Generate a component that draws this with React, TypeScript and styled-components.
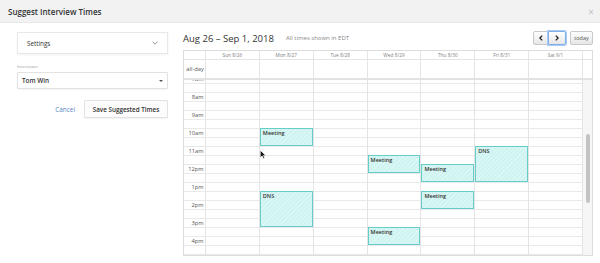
import React from "react";
import styled, { createGlobalStyle } from "styled-components";

const DAYS = ["Sun 8/26", "Mon 8/27", "Tue 8/28", "Wed 8/29", "Thu 8/30", "Fri 8/31", "Sat 9/1"];

const FIRST_HOUR = 7;
const LAST_LABEL_HOUR = 16;
const SLOT_HEIGHT = 9;
const SLOT_COUNT = 22;

interface CalEvent {
  day: number;
  start: number;
  end: number;
  title: string;
}

const EVENTS: CalEvent[] = [
  { day: 1, start: 10, end: 11, title: "Meeting" },
  { day: 1, start: 13.5, end: 15.5, title: "DNS" },
  { day: 3, start: 11.5, end: 12.5, title: "Meeting" },
  { day: 3, start: 15.5, end: 16.5, title: "Meeting" },
  { day: 4, start: 12, end: 13, title: "Meeting" },
  { day: 4, start: 13.5, end: 14.5, title: "Meeting" },
  { day: 5, start: 11, end: 13, title: "DNS" },
];

const hourLabel = (h: number) => {
  if (h === 12) return "12pm";
  return h < 12 ? `${h}am` : `${h - 12}pm`;
};

const slotLabel = (i: number) => {
  if (i % 2 !== 0) return "";
  const h = FIRST_HOUR + i / 2;
  return h <= LAST_LABEL_HOUR ? hourLabel(h) : "";
};

const App = () => {
  const slots = Array.from({ length: SLOT_COUNT }, (_, i) => i);

  return (
    <Modal>
      <GlobalStyle />
      <Header>
        <HeaderTitle>Suggest Interview Times</HeaderTitle>
        <Close>×</Close>
      </Header>

      <Body>
        <Sidebar>
          <Accordion>
            <span>Settings</span>
            <svg width="6" height="4" viewBox="0 0 6 4">
              <polyline points="0.5,0.8 3,3.2 5.5,0.8" fill="none" stroke="#777" strokeWidth="0.8" />
            </svg>
          </Accordion>

          <FieldLabel>Interviewer</FieldLabel>
          <Select>
            <span>Tom Win</span>
            <Caret />
          </Select>

          <Actions>
            <CancelLink>Cancel</CancelLink>
            <SaveButton>Save Suggested Times</SaveButton>
          </Actions>
        </Sidebar>

        <Main>
          <Toolbar>
            <RangeTitle>Aug 26 – Sep 1, 2018</RangeTitle>
            <TimezoneNote>All times shown in EDT</TimezoneNote>
            <NavGroup>
              <NavButton $side="left">
                <svg width="4" height="6" viewBox="0 0 4 6">
                  <polyline points="3.2,0.6 0.9,3 3.2,5.4" fill="none" stroke="#222" strokeWidth="1.3" />
                </svg>
              </NavButton>
              <NavButton $side="right" $focused>
                <svg width="4" height="6" viewBox="0 0 4 6">
                  <polyline points="0.8,0.6 3.1,3 0.8,5.4" fill="none" stroke="#222" strokeWidth="1.3" />
                </svg>
              </NavButton>
            </NavGroup>
            <TodayButton>today</TodayButton>
          </Toolbar>

          <Table>
            <HeadRow>
              <HeadCell />
              {DAYS.map((d) => (
                <HeadCell key={d}>{d}</HeadCell>
              ))}
              <HeadCell />
            </HeadRow>

            <AllDayRow>
              <AllDayAxis>all-day</AllDayAxis>
              {DAYS.map((d) => (
                <AllDayCell key={d} />
              ))}
              <AllDayCell />
            </AllDayRow>

            <Divider />

            <TimeBody>
              <Scroller>
                <ScrollContent>
                  {slots.map((i) => (
                    <SlotRow key={i}>
                      <SlotAxis>{slotLabel(i)}</SlotAxis>
                      <SlotLane />
                    </SlotRow>
                  ))}

                  <Columns>
                    {DAYS.map((d, dayIndex) => (
                      <DayColumn key={d}>
                        {EVENTS.filter((e) => e.day === dayIndex).map((e) => (
                          <Event
                            key={`${e.day}-${e.start}`}
                            style={{
                              top: (e.start - FIRST_HOUR) * SLOT_HEIGHT * 2,
                              height: (e.end - e.start) * SLOT_HEIGHT * 2,
                            }}
                          >
                            <EventTitle>{e.title}</EventTitle>
                          </Event>
                        ))}
                      </DayColumn>
                    ))}
                  </Columns>
                </ScrollContent>
              </Scroller>
              <Gutter>
                <Thumb />
              </Gutter>
            </TimeBody>
          </Table>
        </Main>
      </Body>

      <Pointer width="6" height="9" viewBox="0 0 8 12">
        <path d="M0.5 0.5 L0.5 10 L2.9 7.8 L4.6 11.4 L6.1 10.7 L4.4 7.2 L7.4 7.2 Z" fill="#111" stroke="#fff" strokeWidth="0.6" />
      </Pointer>
    </Modal>
  );
};

export default App;

const GlobalStyle = createGlobalStyle`
  html, body {
    margin: 0;
    padding: 0;
  }
  body {
    width: 600px;
    height: 263px;
    overflow: hidden;
    background: #ffffff;
    font-family: "Open Sans", "Liberation Sans", sans-serif;
    color: #333;
  }
`;

const Modal = styled.div`
  position: relative;
  width: 600px;
  height: 263px;
  display: flex;
  flex-direction: column;
  background: #ffffff;
`;

const Header = styled.div`
  height: 23px;
  box-sizing: border-box;
  flex-shrink: 0;
  display: flex;
  align-items: center;
  justify-content: space-between;
  padding: 0 6px 0 8px;
  background: #f2f2f3;
  border-bottom: 1px solid #e8e8e8;
`;

const HeaderTitle = styled.div`
  font-size: 8px;
  font-weight: 600;
  color: #333;
`;

const Close = styled.div`
  font-size: 10px;
  line-height: 10px;
  color: #c4c4c4;
  margin-top: 1px;
`;

const Body = styled.div`
  flex: 1;
  display: flex;
  min-height: 0;
`;

const Sidebar = styled.div`
  width: 183px;
  flex-shrink: 0;
  box-sizing: border-box;
  padding: 9px 15px 0 17px;
`;

const Accordion = styled.div`
  height: 22px;
  box-sizing: border-box;
  display: flex;
  align-items: center;
  justify-content: space-between;
  padding: 0 9px 0 9px;
  border: 1px solid #e8e8e8;
  box-shadow: 0 1px 2px rgba(0, 0, 0, 0.06);
  font-size: 6.3px;
  color: #333;
`;

const FieldLabel = styled.div`
  margin-top: 10px;
  font-size: 4px;
  line-height: 6px;
  color: #9a9a9a;
`;

const Select = styled.div`
  margin-top: 2px;
  height: 17px;
  box-sizing: border-box;
  display: flex;
  align-items: center;
  justify-content: space-between;
  padding: 0 4px 0 4px;
  border: 1px solid #e2e2e2;
  border-radius: 1px;
  box-shadow: 0 1px 1px rgba(0, 0, 0, 0.04);
  font-size: 6.4px;
  font-weight: 600;
  color: #333;
`;

const Caret = styled.span`
  width: 0;
  height: 0;
  border-left: 2px solid transparent;
  border-right: 2px solid transparent;
  border-top: 2px solid #555;
`;

const Actions = styled.div`
  margin-top: 11px;
  display: flex;
  align-items: center;
  justify-content: flex-end;
  gap: 9px;
`;

const CancelLink = styled.span`
  font-size: 6.4px;
  color: #5686c4;
`;

const SaveButton = styled.div`
  width: 84px;
  height: 18px;
  box-sizing: border-box;
  display: flex;
  align-items: center;
  justify-content: center;
  border: 1px solid #e2e2e2;
  border-radius: 1px;
  background: #fcfcfc;
  box-shadow: 0 1px 1px rgba(0, 0, 0, 0.05);
  font-size: 6.3px;
  font-weight: 600;
  color: #333;
`;

const Main = styled.div`
  flex: 1;
  box-sizing: border-box;
  padding: 8px 7px 0 0;
  display: flex;
  flex-direction: column;
`;

const Toolbar = styled.div`
  height: 14px;
  display: flex;
  align-items: center;
  margin-bottom: 5px;
`;

const RangeTitle = styled.div`
  font-size: 9.5px;
  color: #333;
  white-space: nowrap;
`;

const TimezoneNote = styled.div`
  margin-left: 12px;
  font-size: 6px;
  color: #888;
  white-space: nowrap;
`;

const NavGroup = styled.div`
  margin-left: auto;
  display: flex;
  height: 14px;
`;

const NavButton = styled.div<{ $side: "left" | "right"; $focused?: boolean }>`
  width: ${(p) => (p.$side === "left" ? 15 : 18)}px;
  height: 14px;
  box-sizing: border-box;
  display: flex;
  align-items: center;
  justify-content: center;
  background: linear-gradient(#ffffff, #e6e6e6);
  border: 1px solid ${(p) => (p.$focused ? "#7fb0ea" : "#c9c9c9")};
  box-shadow: ${(p) => (p.$focused ? "0 0 0 1px #a9cbf3" : "none")};
  border-radius: ${(p) => (p.$side === "left" ? "2px 0 0 2px" : "0 2px 2px 0")};
`;

const TodayButton = styled.div`
  margin-left: 4px;
  width: 23px;
  height: 14px;
  box-sizing: border-box;
  display: flex;
  align-items: center;
  justify-content: center;
  background: linear-gradient(#ffffff, #e6e6e6);
  border: 1px solid #c9c9c9;
  border-radius: 2px;
  font-size: 5.5px;
  color: #555;
`;

const Table = styled.div`
  width: 410px;
  height: 206px;
  box-sizing: border-box;
  border: 1px solid #dddddd;
  display: flex;
  flex-direction: column;
`;

const COLUMNS = "22px repeat(7, 1fr) 9px";

const HeadRow = styled.div`
  display: grid;
  grid-template-columns: ${COLUMNS};
  height: 9px;
  box-sizing: border-box;
  border-bottom: 1px solid #e4e4e4;
`;

const HeadCell = styled.div`
  border-right: 1px solid #e4e4e4;
  font-size: 4.8px;
  line-height: 8px;
  text-align: center;
  color: #808080;
  white-space: nowrap;

  &:last-child {
    border-right: none;
  }
`;

const AllDayRow = styled.div`
  display: grid;
  grid-template-columns: ${COLUMNS};
  height: 18px;
`;

const AllDayCell = styled.div`
  border-right: 1px solid #e4e4e4;

  &:last-child {
    border-right: none;
  }
`;

const AllDayAxis = styled.div`
  border-right: 1px solid #e4e4e4;
  display: flex;
  align-items: center;
  justify-content: flex-end;
  padding-right: 1px;
  font-size: 5.8px;
  color: #555;
  white-space: nowrap;
`;

const Divider = styled.div`
  height: 2px;
  background: #e2e2e2;
`;

const TimeBody = styled.div`
  flex: 1;
  display: flex;
  min-height: 0;
`;

const Scroller = styled.div`
  flex: 1;
  overflow: hidden;
  position: relative;
`;

const ScrollContent = styled.div`
  position: relative;
  margin-top: -6px;
`;

const SlotRow = styled.div`
  display: flex;
  height: ${SLOT_HEIGHT}px;
  box-sizing: border-box;
  border-top: 1px solid #e9e9e9;
`;

const SlotAxis = styled.div`
  width: 22px;
  flex-shrink: 0;
  box-sizing: border-box;
  border-right: 1px solid #e4e4e4;
  padding: 1px 1.5px 0 0;
  text-align: right;
  font-size: 5.7px;
  line-height: 7px;
  color: #555;
  white-space: nowrap;
`;

const SlotLane = styled.div`
  flex: 1;
`;

const Columns = styled.div`
  position: absolute;
  top: 0;
  bottom: 0;
  left: 22px;
  right: 0;
  display: grid;
  grid-template-columns: repeat(7, 1fr);
`;

const DayColumn = styled.div`
  position: relative;
  border-right: 1px solid #e4e4e4;
`;

const Event = styled.div`
  position: absolute;
  left: 0;
  right: 0;
  box-sizing: border-box;
  border: 1px solid #68cdc6;
  background-color: #d6f6f4;
  background-image: repeating-linear-gradient(
    135deg,
    #d9f7f5 0px,
    #d9f7f5 1.6px,
    #cdf2ef 1.6px,
    #cdf2ef 3px
  );
  overflow: hidden;
`;

const EventTitle = styled.div`
  padding: 1px 2px 0;
  font-size: 5.5px;
  line-height: 7px;
  font-weight: 600;
  color: #333;
`;

const Gutter = styled.div`
  width: 9px;
  flex-shrink: 0;
  background: #f6f6f6;
  display: flex;
  justify-content: center;
`;

const Thumb = styled.div`
  margin-top: 54px;
  width: 4px;
  height: 69px;
  border-radius: 2px;
  background: #c3c3c3;
`;

const Pointer = styled.svg`
  position: absolute;
  left: 260px;
  top: 150px;
`;
